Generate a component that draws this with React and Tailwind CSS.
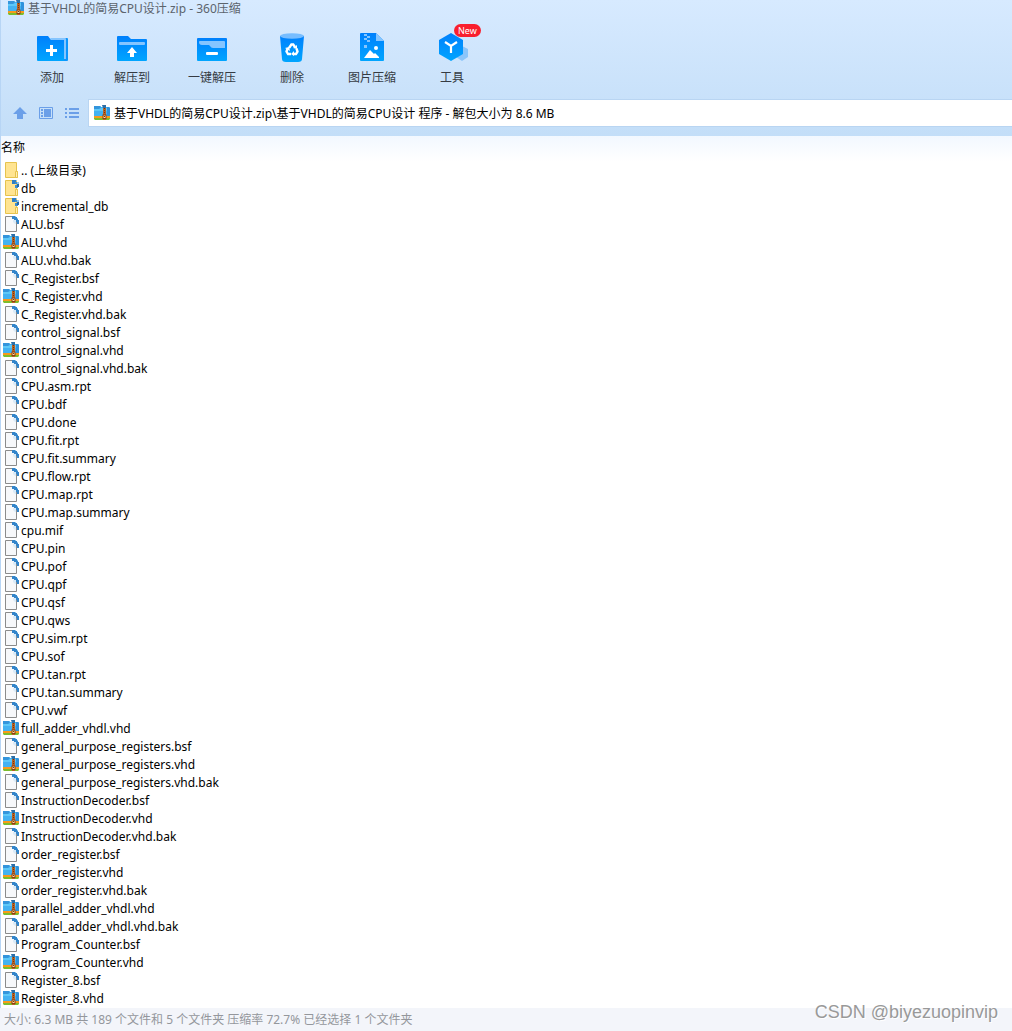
import React from "react";

const files = [
  ["up", ".. (上级目录)"],
  ["folder", "db"],
  ["folder", "incremental_db"],
  ..."ALU.bsf ALU.vhd ALU.vhd.bak C_Register.bsf C_Register.vhd C_Register.vhd.bak control_signal.bsf control_signal.vhd control_signal.vhd.bak CPU.asm.rpt CPU.bdf CPU.done CPU.fit.rpt CPU.fit.summary CPU.flow.rpt CPU.map.rpt CPU.map.summary cpu.mif CPU.pin CPU.pof CPU.qpf CPU.qsf CPU.qws CPU.sim.rpt CPU.sof CPU.tan.rpt CPU.tan.summary CPU.vwf full_adder_vhdl.vhd general_purpose_registers.bsf general_purpose_registers.vhd general_purpose_registers.vhd.bak InstructionDecoder.bsf InstructionDecoder.vhd InstructionDecoder.vhd.bak order_register.bsf order_register.vhd order_register.vhd.bak parallel_adder_vhdl.vhd parallel_adder_vhdl.vhd.bak Program_Counter.bsf Program_Counter.vhd Register_8.bsf Register_8.vhd"
    .split(" ")
    .map((name) => [name.endsWith(".vhd") ? "zip" : "page", name]),
];

function ZipIcon() {
  return (
    <svg className="size-4 shrink-0" viewBox="0 0 16 16" aria-hidden="true">
      <path d="M0 1h6l1 1h8l1 1v9H0z" fill="#43b2f2" />
      <path d="M0 1h6l1 1-2 2H0z" fill="#3495dc" />
      <path d="M0 4h6l1-1h6v3H0z" fill="#5ec8f8" />
      <path d="M13 2h2l1 1v8h-3z" fill="#2f92dc" />
      <path d="M0 11h16v2H0z" fill="#f79a1c" />
      <path d="M0 13h16v1l-1 1H1l-1-1z" fill="#7cbd2e" />
      <path d="M9 1h3v14H9z" fill="#b86224" />
      <path d="M8 0h4v3H9z" fill="#2c6fa8" />
      <path d="M10 3h1v1h-1zM10 5h1v1h-1zM10 7h1v1h-1z" fill="#6f3515" />
      <path d="M8.500 9.500h4V14h-4z" fill="#8b3d13" />
      <path d="M9.500 10.500h2V13h-2z" fill="#ffe2a5" />
      <path d="M10 11h1v1h-1z" fill="#7b3412" />
    </svg>
  );
}

function FolderIcon({ tagged }) {
  return (
    <svg className="size-4 shrink-0" viewBox="0 0 16 16" aria-hidden="true">
      <path d="M2.500.5h11v9h1v6h-12z" fill="#ffe491" stroke="#e6c34e" />
      <path d="M12.500 9.500h2v6h-2z" fill="#ffeeb0" stroke="#e6c34e" />
      {tagged && (
        <g>
          <path d="M9 0h4v4H9z" fill="#2f7fc4" />
          <path d="M12 2h2v2h-2zM12 5h3v3h-3z" fill="#3b8dd0" />
          <path d="M13 0h1v1h-1zM14 2h2v2h-2z" fill="#8cc6ee" />
          <path d="M14 4h2v3h-2z" fill="#2369aa" />
        </g>
      )}
    </svg>
  );
}

function PageIcon() {
  return (
    <svg className="size-4 shrink-0" viewBox="0 0 16 16" aria-hidden="true">
      <path d="M2.500.5h9l2 3v12h-11z" fill="#f7f8fa" stroke="#8b8b8b" />
      <path d="M10 4h3v4h-1l-2-2z" fill="#dcebf7" />
      <path d="M9 0h3v1h2v2h1v1h1v4h-2V6h-1V4h-2V3H9z" fill="#3485ca" />
      <path d="M12 0h1v1h-1zM14 2h1v1h-1z" fill="#8cc6ee" />
    </svg>
  );
}

function FileIcon({ kind }) {
  if (kind === "zip") return <ZipIcon />;
  if (kind === "page") return <PageIcon />;
  return <FolderIcon tagged={kind === "folder"} />;
}

const art = {
  add: (
    <>
      <path d="M24 6h7q1 0 1 1v21q0 1-1 1h-7z" fill="#0c95fd" />
      <path d="M14 6h15q1 0 1 1v20h-2V9H16z" fill="#85c5ff" />
      <path d="M1 5q0-1 1-1h10l3 4h13v21H2q-1 0-1-1z" fill="url(#blue)" />
      <path d="M14 13h3v4h4v3h-4v4h-3v-4h-4v-3h4z" fill="#fff" />
    </>
  ),
  extract: (
    <>
      <path d="M1 5q0-1 1-1h10l3 3h15q1 0 1 1v20q0 1-1 1H2q-1 0-1-1z" fill="url(#blue)" />
      <rect x="3" y="10" width="26" height="3" rx="1" fill="#85c5ff" />
      <path d="m16 15 5 6h-3v4h-4v-4h-3z" fill="#fff" />
    </>
  ),
  oneKey: (
    <>
      <rect x="1" y="6" width="30" height="23" rx="1" fill="url(#blue)" />
      <path d="M3 10q0-1 1-1h24q1 0 1 1v6H17q-2 0-3-2l-1-1H6q-3 0-3-3z" fill="#85c5ff" />
      <rect x="10" y="20" width="12" height="3" rx="1" fill="#fff" />
    </>
  ),
  remove: (
    <>
      <path d="M4 4h24l-2 23q0 3-4 3H10q-4 0-4-3z" fill="url(#blue)" />
      <ellipse cx="16" cy="4" rx="12" ry="2.8" fill="#77bdff" />
      <g fill="none" stroke="#fff" strokeWidth="2.4">
        <path d="m13 16 2.400-3.500h1.800L19 15" />
        <path d="m20.500 16.500 1 3-1.500 2.500h-3" />
        <path d="M15 22h-3l-1.500-2.500 1-2.500" />
      </g>
      <path d="m17 16 4-3v4zM18 19v5l-3-2zM9 16l4-1 1 4z" fill="#fff" />
    </>
  ),
  image: (
    <>
      <path d="M4 2q0-1 1-1h15l8 8v19q0 1-1 1H5q-1 0-1-1z" fill="url(#blue)" />
      <path d="M20 1v8h8z" fill="#85c5ff" />
      <path d="M8 2h3v2H8zM11 4h3v2h-3zM8 6h3v2H8zM11 8h3v2h-3zM8 13h3v3H8z" fill="#85c5ff" />
      <circle cx="20" cy="16" r="2" fill="#fff" />
      <path d="m8 26 6-8 4 4 1-1 4 4v1z" fill="#fff" />
    </>
  ),
  tools: (
    <>
      <path d="m26 14 6 3v8l-6 4-6-4v-8z" fill="#8bc5fa" />
      <path d="m15 1 12 7v14l-12 7L3 22V8z" fill="url(#blue)" />
      <path d="m9 10 6 4 6-4m-6 4v7" fill="none" stroke="#fff" strokeWidth="2.2" />
    </>
  ),
};

const tools = [
  ["add", "添加"],
  ["extract", "解压到"],
  ["oneKey", "一键解压"],
  ["remove", "删除"],
  ["image", "图片压缩"],
  ["tools", "工具"],
];

export default function App() {
  return (
    <main className="flex min-h-screen flex-col bg-white font-['Noto_Sans','Noto_Sans_CJK_SC',sans-serif] text-xs text-black">
      <svg className="absolute size-0" aria-hidden="true">
        <defs>
          <linearGradient id="blue" x1="0" y1="0" x2="0" y2="1">
            <stop offset="0" stopColor="#0080fc" />
            <stop offset="1" stopColor="#00a5ff" />
          </linearGradient>
        </defs>
      </svg>
      <header className="border-l border-[#b7d5f5] bg-linear-to-b from-[#d7eaff] to-[#c3def8]">
        <h1 className="flex h-[18px] items-start gap-1 pl-[7px] text-[#5c646d]">
          <ZipIcon />
          <span className="leading-[18px] whitespace-nowrap">基于VHDL的简易CPU设计.zip - 360压缩</span>
        </h1>
        <nav className="flex h-[81px] pt-3 pl-[11px]">
          {tools.map(([id, label]) => (
            <button key={id} type="button" className="relative flex w-20 flex-col items-center gap-2 self-start text-[#353b43]">
              <svg className="h-8 w-8 overflow-visible" viewBox="0 -2 32 32" aria-hidden="true">
                {art[id]}
              </svg>
              <span className="leading-4">{label}</span>
              {id === "tools" && (
                <span className="absolute -top-1.5 left-[42px] h-[13px] rounded-full bg-[#f91f2e] px-1 text-[9px] leading-[13px] text-white">New</span>
              )}
            </button>
          ))}
        </nav>
        <div className="flex h-[37px] items-start">
          <div className="flex h-7 w-[87px] shrink-0 items-center gap-2.5 pl-[11px] text-[#6b9fe8]">
            <button type="button" aria-label="上级目录">
              <svg className="size-4" viewBox="0 0 16 16" fill="currentColor"><path d="m8 2 7 7h-4v5H5V9H1z" /></svg>
            </button>
            <button type="button" aria-label="预览">
              <svg className="size-4" viewBox="0 0 16 16" fill="currentColor"><path d="M1.500 2.500h13v11h-13z" fill="none" stroke="currentColor" /><path d="M6 4h7v8H6zM3 4h2v2H3zM3 7h2v2H3zM3 10h2v2H3z" /></svg>
            </button>
            <button type="button" aria-label="列表">
              <svg className="size-4" viewBox="0 0 16 16" fill="currentColor"><path d="M1 3h2v2H1zM5 3h10v2H5zM1 7h2v2H1zM5 7h10v2H5zM1 11h2v2H1zM5 11h10v2H5z" /></svg>
            </button>
          </div>
          <label className="flex h-7 min-w-0 grow items-center gap-1 border border-r-0 border-[#b9d5f2] bg-white pl-[5px]">
            <ZipIcon />
            <input
              aria-label="路径"
              className="min-w-0 grow pt-0.5 outline-none"
              defaultValue="基于VHDL的简易CPU设计.zip\基于VHDL的简易CPU设计 程序 - 解包大小为 8.6 MB"
            />
          </label>
        </div>
      </header>
      <section className="grow border-l border-[#b7d5f5]">
        <table className="w-full border-collapse">
          <thead>
            <tr className="h-[26px] bg-linear-to-b from-[#f2f8ff] to-white">
              <th className="p-0 pb-0.5 text-left align-middle leading-4 font-normal">名称</th>
            </tr>
          </thead>
          <tbody>
            {files.map(([kind, name]) => (
              <tr key={name} className="h-[18px]">
                <td className="p-0">
                  <div className="flex h-[18px] items-start gap-0.5 pl-0.5 leading-[18px] whitespace-nowrap">
                    <FileIcon kind={kind} />
                    <span>{name}</span>
                  </div>
                </td>
              </tr>
            ))}
          </tbody>
        </table>
      </section>
      <footer className="flex h-[23px] items-center justify-between bg-[#f3f5fa] pr-3.5 pl-1 text-[#94979c]">
        <span className="whitespace-nowrap">大小: 6.3 MB 共 189 个文件和 5 个文件夹 压缩率 72.7% 已经选择 1 个文件夹</span>
        <span className="relative bottom-2 font-['Liberation_Sans',sans-serif] text-lg leading-5 text-[#999] text-shadow-[1px_1px_0_#fff]">CSDN @biyezuopinvip</span>
      </footer>
    </main>
  );
}
